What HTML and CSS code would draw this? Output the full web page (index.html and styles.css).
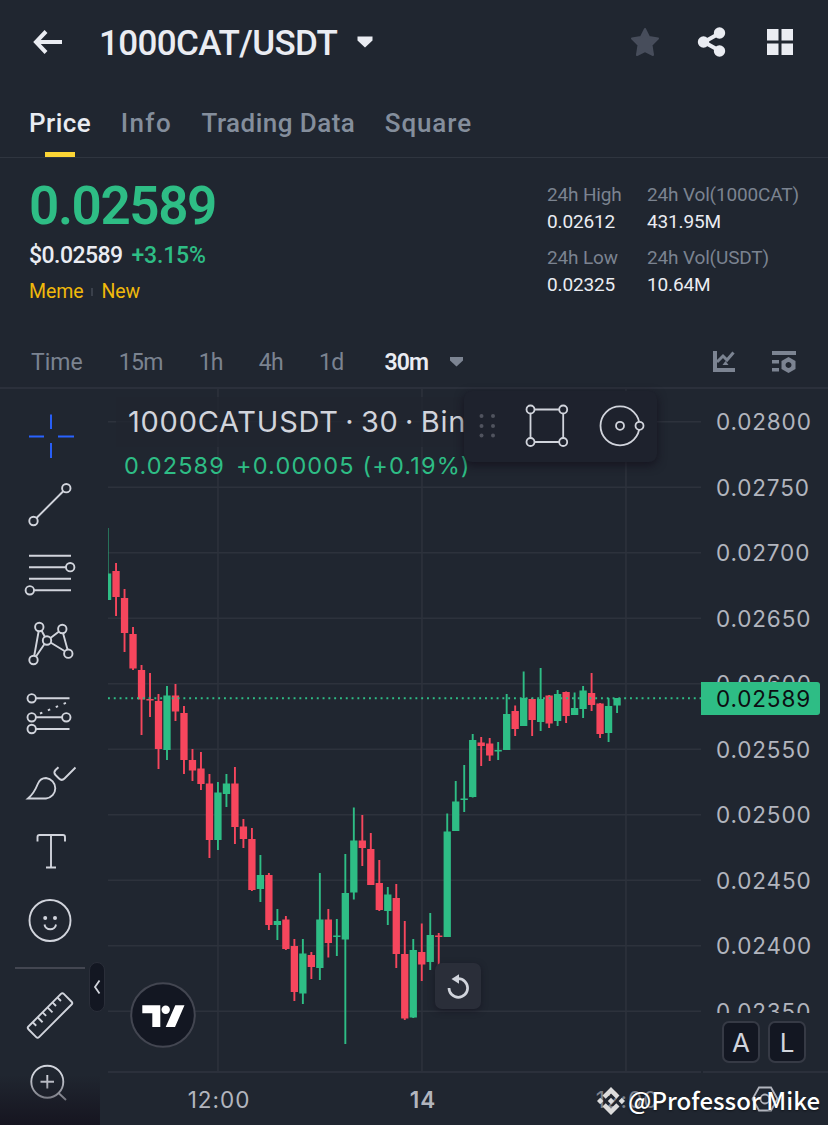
FILE: index.html
```html
<!DOCTYPE html>
<html lang="en">
<head>
    <meta charset="UTF-8">
    <meta name="viewport" content="width=device-width, initial-scale=1.0">
    <title>1000CAT/USDT</title>
    <link rel="stylesheet" href="styles.css">
</head>
<body>
    <header class="header">
        <svg class="back" width="30" height="24" viewBox="0 0 30 24"><path d="M13 1.5L3 12l10 10.500M3 12h26" fill="none" stroke="#eaecf2" stroke-width="4"/></svg>
        <h1 class="pair">1000CAT/USDT</h1>
        <svg class="caret" width="16" height="12" viewBox="0 0 16 12"><path d="M.5 .5h15v4L8 11.500.500 4.500z" fill="#eaecf2"/></svg>
        <div class="actions">
            <svg width="30" height="30" viewBox="0 0 30 30"><path d="M15 2l4 8 9 1.500-6.500 6.500 1.500 10-8-4-8 4 1.500-10L2 11.500 11 10z" fill="#474d5b" stroke="#474d5b" stroke-width="2" stroke-linejoin="round"/></svg>
            <svg width="30" height="30" viewBox="0 0 30 30" fill="#eaecf2"><path d="M23 6L7 15l16 9" fill="none" stroke="#eaecf2" stroke-width="4"/><circle cx="22.500" cy="6" r="5.700"/><circle cx="6.500" cy="15" r="5.700"/><circle cx="22.500" cy="24" r="5.700"/></svg>
            <svg class="apps" width="26" height="26" viewBox="0 0 26 26" fill="#eaecf2"><path d="M0 0h11.500v11.500H0zM14.500 0H26v11.500H14.500zM0 14.500h11.500V26H0zM14.500 14.500H26V26H14.500z"/></svg>
        </div>
    </header>

    <nav class="tabs">
        <a class="tab active">Price</a>
        <a class="tab info">Info</a>
        <a class="tab">Trading Data</a>
        <a class="tab square">Square</a>
    </nav>

    <section class="summary">
        <div class="quote">
            <div class="last">0.02589</div>
            <div class="fiat"><span>$0.02589</span><span class="up">+3.15%</span></div>
            <div class="tags"><span>Meme</span><i></i><span>New</span></div>
        </div>
        <dl class="stats">
            <div><dt>24h High</dt><dd>0.02612</dd></div>
            <div><dt>24h Vol(1000CAT)</dt><dd>431.95M</dd></div>
            <div><dt>24h Low</dt><dd>0.02325</dd></div>
            <div><dt>24h Vol(USDT)</dt><dd>10.64M</dd></div>
        </dl>
    </section>

    <div class="intervals">
        <span class="line-mode">Time</span>
        <span>15m</span>
        <span>1h</span>
        <span>4h</span>
        <span>1d</span>
        <span class="selected">30m</span>
        <svg class="more" width="13" height="10" viewBox="0 0 13 10"><path d="M0 0h13v3.500L6.500 9.500 0 3.500z" fill="#7c8492"/></svg>
        <div class="chart-actions">
            <svg width="22" height="22" viewBox="0 0 22 22"><path d="M2 0v19h20" fill="none" stroke="#7c8492" stroke-width="4"/><path d="M4 11l6-6 4 4 6.500-7.500" fill="none" stroke="#7c8492" stroke-width="3"/><path d="M12.500 10l3 4h-6z" fill="#7c8492"/></svg>
            <svg width="24" height="24" viewBox="0 0 24 24" fill="#7c8492"><path d="M0 1h24v4H0zM0 10h7v3.500H0zM0 18h7v3.500H0z"/><path fill-rule="evenodd" d="M16.500 7l7 4v8l-7 4-7-4v-8zM16.500 12a3 3 0 1 0 .01 0z"/></svg>
        </div>
    </div>

    <main class="chart">
        <aside class="tools">
            <svg class="tool" viewBox="0 0 100 69"><path d="M51 12.500V27M51 41v15M29 34.500h15M58 34.500h16" stroke="#2962ff"/></svg>
            <svg class="tool" viewBox="0 0 100 69"><path d="M36.500 47l27-27"/><circle cx="66.300" cy="17.200" r="4.200"/><circle cx="33.500" cy="50" r="4.200"/></svg>
            <svg class="tool" viewBox="0 0 100 69"><path d="M29 15.800h42M29 27.200h37M29 38.800h42M34 50.300h37"/><circle cx="70.200" cy="27.200" r="4.200"/><circle cx="29.800" cy="50.300" r="4.200"/></svg>
            <svg class="tool" viewBox="0 0 100 69"><path d="M38.700 22l-4.500 25M41.500 21.500l3.500 6.500M44.500 35l-8.500 12.500M50.500 29l8.500-6.500M63 24l4.500 16.500M50.500 33.500l14 8.500"/><circle cx="39.300" cy="18" r="4.200"/><circle cx="62.300" cy="20" r="4.200"/><circle cx="47" cy="31.500" r="4.200"/><circle cx="33.500" cy="51" r="4.200"/><circle cx="68.300" cy="44.700" r="4.200"/></svg>
            <svg class="tool" viewBox="0 0 100 69"><path d="M36 20.300h33.500M36 39.300h26M36 51h33.500"/><path d="M40 35.500l27-11" stroke-dasharray="2.500 6"/><circle cx="31.700" cy="20.300" r="4.200"/><circle cx="31.700" cy="39.300" r="4.200"/><circle cx="66.300" cy="39.300" r="4.200"/><circle cx="31.700" cy="51" r="4.200"/></svg>
            <svg class="tool" viewBox="0 0 100 69"><path d="M28 51.500c6-5 8-10 10-15 1.500-3.500 5-5.500 8-5.500a10.300 10.300 0 0 1 0 20.500zM75.500 20.500L64.500 31.500c-2 2-4 1.500-5.500 0l-3.500-3.500c-1.500-1.500-1.500-3.500 0-5l3-2.800"/></svg>
            <svg class="tool" viewBox="0 0 100 69"><path d="M37.500 25.500V21q0-2 2-2h23.500q2 0 2 2v4.500M51 19v32.500M46 51.500h10"/></svg>
            <svg class="tool" viewBox="0 0 100 69"><circle cx="50" cy="35.500" r="20.500"/><path d="M44.500 39.500a5.800 5.500 0 0 0 11.500 0"/><g fill="#d1d4dc" stroke="none"><circle cx="45.200" cy="33" r="2"/><circle cx="55" cy="33" r="2"/></g></svg>
            <hr class="divider">
            <svg class="tool" viewBox="0 0 100 69"><g transform="rotate(-45 50 34.500)"><rect x="25" y="27" width="50" height="15" rx="2"/><path d="M33 27v5M40 27v7M47 27v5M54 27v7M61 27v5M68 27v5"/></g></svg>
            <svg class="tool" viewBox="0 0 100 69"><circle cx="47.300" cy="31.700" r="16"/><path d="M40.500 31.700h13.500M47.300 25v13.500M58.500 43l7.500 7"/></svg>
        </aside>
        <button class="collapse"><svg width="8" height="16" viewBox="0 0 8 16"><path d="M6.500 1.500L2 8l4.500 6.500" fill="none" stroke="#d1d4dc" stroke-width="1.800"/></svg></button>

        <div class="pane">
            <svg id="plot" class="plot" viewBox="108 389 593 682"></svg>
            <div class="time-axis">
                <span>12:00</span>
                <span class="day">14</span>
                <span class="dim">12:00</span>
            </div>
            <div class="legend">
                <div class="symbol">1000CATUSDT · 30 · Bin</div>
                <div class="change"><span>0.02589</span><span>+0.00005 (+0.19%)</span></div>
            </div>
            <svg class="tv-logo" viewBox="0 0 66 66"><circle cx="33" cy="33" r="31.800" fill="#131722" stroke="#434651" stroke-width="2"/><g fill="#fff"><path d="M12.300 23.300h18V45h-8V31.300h-10zM45.300 23.300H54.500L45 45h-9.300z"/><circle cx="35.700" cy="27.700" r="4.200"/></g></svg>
            <button class="reset"><svg width="24" height="26" viewBox="0 0 24 26"><path d="M3 15a9.300 9.300 0 1 0 9.300-9.300" fill="none" stroke="#d1d4dc" stroke-width="2.700"/><path d="M5.500 6L13 1.300v9.400z" fill="#d1d4dc"/></svg></button>
            <div class="shapes">
                <svg width="193" height="71" viewBox="464 391 193 71" fill="none" stroke="#d1d4dc" stroke-width="1.800">
                    <g fill="#50535e" stroke="none"><circle cx="481.500" cy="416" r="2"/><circle cx="493" cy="416" r="2"/><circle cx="481.500" cy="426" r="2"/><circle cx="493" cy="426" r="2"/><circle cx="481.500" cy="435.500" r="2"/><circle cx="493" cy="435.500" r="2"/></g>
                    <path d="M534.500 409.500H559M534.500 442H559M530.500 413.500V438M563.200 413.500V438"/>
                    <circle cx="530.500" cy="409.500" r="4"/><circle cx="563.200" cy="409.500" r="4"/><circle cx="530.500" cy="442" r="4"/><circle cx="563.200" cy="442" r="4"/>
                    <circle cx="620" cy="425.800" r="19.500"/><circle cx="620" cy="425.800" r="4"/><circle cx="639.500" cy="425.800" r="4" fill="#1e222d"/>
                </svg>
            </div>
        </div>

        <div class="price-axis">
            <div class="prices">
                <span>0.02800</span>
                <span>0.02750</span>
                <span>0.02700</span>
                <span>0.02650</span>
                <span>0.02600</span>
                <span>0.02550</span>
                <span>0.02500</span>
                <span>0.02450</span>
                <span>0.02400</span>
                <span>0.02350</span>
            </div>
            <div class="current">0.02589</div>
            <div class="scale">
                <button>A</button>
                <button>L</button>
            </div>
            <div class="settings">
                <svg width="28" height="28" viewBox="0 0 28 28" fill="none" stroke="#b2b5be" stroke-width="1.800"><path d="M8 2.500h12L26.500 14 20 25.500H8L1.500 14z"/><circle cx="14" cy="14" r="4.500"/></svg>
            </div>
        </div>
    </main>

    <div class="watermark">
        <svg width="28" height="28" viewBox="0 0 28 28" fill="#dcdcdc"><path d="M14 0l8.500 8.500-3.200 3.200L14 6.400l-5.300 5.300-3.200-3.200zM3.200 10.800L6.400 14l-3.200 3.200L0 14zM14 10.800l3.200 3.200-3.200 3.200-3.200-3.200zM24.800 10.800L28 14l-3.200 3.200-3.200-3.200zM8.700 16.300l5.300 5.300 5.300-5.300 3.200 3.200L14 28l-8.500-8.500z"/></svg>
        <span>@Professor Mike</span>
    </div>

    <script>
        const UP = '#2ebd85';
        const DOWN = '#f6465d';

        // direction, wick top, wick bottom, body top, body bottom
        const candles = [
            ['u', 528, 600, 573.5, 600], ['d', 563, 616, 571, 597], ['d', 589, 652, 598, 633],
            ['d', 627, 670, 634, 668.5], ['d', 665, 735, 670, 699.5], ['d', 673, 717, 699, 700.5],
            ['d', 694, 769, 701, 749], ['u', 686, 760, 695.5, 750], ['d', 684, 721, 695.5, 711.5],
            ['d', 706, 774, 713, 760], ['d', 749, 781, 760, 770.5], ['d', 752, 790, 768.5, 784],
            ['d', 774, 858, 783.5, 840], ['u', 782, 850, 792.5, 840], ['u', 774, 807, 783.5, 794],
            ['d', 767, 844, 783.5, 827], ['d', 819, 848, 826.5, 839], ['d', 828, 891, 839, 890],
            ['u', 855, 902, 875, 889], ['d', 873, 930, 875, 925], ['u', 909, 940, 921, 925],
            ['d', 916, 950, 919.5, 949], ['d', 939, 1001, 946, 992], ['u', 939, 1004, 953.5, 993.5],
            ['d', 952, 979, 955, 967], ['u', 873, 980, 919.5, 968], ['d', 909, 957.5, 919.5, 943],
            ['u', 919, 956, 935.5, 937], ['u', 854, 1044, 893, 939.5], ['u', 807.5, 899.5, 840.5, 892.5],
            ['d', 815, 866, 840.5, 848], ['d', 833, 885, 849, 885], ['d', 860, 911, 883, 910],
            ['u', 887, 925, 894.5, 911], ['d', 884, 968, 898, 954], ['d', 921, 1020, 954, 1018.5],
            ['u', 939, 1018, 950, 1017.5], ['d', 923.5, 981, 952, 964.5], ['u', 913, 970, 935, 962],
            ['d', 933, 970, 935.5, 937], ['u', 813.5, 937, 831.5, 937], ['u', 781, 831, 801.5, 831],
            ['u', 765, 812, 798.5, 800], ['u', 734, 797.5, 740, 797], ['d', 737, 766, 742.5, 746],
            ['d', 738, 761, 743.5, 755.5], ['u', 742, 760, 750, 751.5], ['u', 694, 750, 714, 750],
            ['d', 705.5, 736, 711, 729], ['u', 671.5, 726, 698, 726], ['d', 698, 736, 699, 720],
            ['u', 668, 731, 699, 722], ['d', 695, 728, 695.5, 723.5], ['u', 690, 726, 694, 721],
            ['d', 691.5, 723, 692, 716], ['u', 692.5, 715, 708, 715], ['u', 686, 718, 690.5, 709],
            ['d', 673, 711, 693, 705], ['d', 703, 738, 703.5, 734], ['u', 698, 742, 706, 733],
            ['u', 698, 713, 698, 705.5]
        ];

        let out = '<g stroke="#2d323c" stroke-width="1.6">';
        for (let i = 0; i < 10; i++) {
            const y = 421.8 + i * 65.5;
            out += `<line x1="108" x2="701" y1="${y}" y2="${y}"/>`;
        }
        [218, 422, 626].forEach(x => {
            out += `<line x1="${x}" x2="${x}" y1="389" y2="1072"/>`;
        });
        out += '</g>';

        candles.forEach((c, i) => {
            const color = c[0] === 'u' ? UP : DOWN;
            const x = 107.5 + i * 8.492;
            out += `<rect x="${x - 0.9}" y="${c[1]}" width="1.9" height="${c[2] - c[1]}" fill="${color}"/>`;
            out += `<rect x="${x - 3.6}" y="${c[3]}" width="7.3" height="${c[4] - c[3]}" fill="${color}"/>`;
        });

        out += `<line x1="108" x2="701" y1="698.3" y2="698.3" stroke="${UP}" stroke-width="1.9" stroke-dasharray="1.9 3.9"/>`;
        document.getElementById('plot').innerHTML = out;
    </script>
</body>
</html>
```
FILE: styles.css
```css
* {
    box-sizing: border-box;
}
body {
    margin: 0;
    width: 828px;
    height: 1125px;
    overflow: hidden;
    position: relative;
    background-color: #202630;
    color: #eaecf2;
    font-family: Roboto, sans-serif;
}
button {
    padding: 0;
    font-family: inherit;
    display: flex;
    align-items: center;
    justify-content: center;
}
.header {
    display: flex;
    align-items: center;
    height: 85px;
    padding: 0 35px 0 33px;
}
.back {
    margin-top: -2px;
}
.pair {
    margin: 2px 0 0 36px;
    font-size: 35px;
    font-weight: 500;
    letter-spacing: -0.65px;
}
.caret {
    margin: -2px 0 0 20px;
}
.actions {
    display: flex;
    align-items: center;
    gap: 37px;
    margin-left: auto;
    margin-top: -1px;
}
.apps {
    margin-left: 3px;
}
.tabs {
    display: flex;
    gap: 29.5px;
    height: 73px;
    padding: 20px 29px 0;
    border-bottom: 1px solid #2f353f;
}
.tab {
    position: relative;
    font-size: 26px;
    line-height: 36px;
    font-weight: 500;
    letter-spacing: 0.45px;
    color: #848e9c;
}
.tab.info {
    letter-spacing: 1.4px;
}
.tab.square {
    letter-spacing: 0.9px;
}
.tab.active {
    color: #eaecf2;
}
.tab.active::after {
    content: "";
    position: absolute;
    left: 16px;
    bottom: 0;
    width: 30px;
    height: 5px;
    background-color: #fcd535;
}
.summary {
    display: flex;
    justify-content: space-between;
    height: 177px;
    padding: 19px 29px 0;
}
.last {
    font-size: 53px;
    line-height: 58px;
    font-weight: 600;
    letter-spacing: -1.4px;
    color: #2ebd85;
}
.fiat {
    display: flex;
    gap: 9px;
    margin-top: 6px;
    font-size: 23px;
    line-height: 30px;
    font-weight: 500;
    letter-spacing: -0.55px;
}
.up {
    letter-spacing: -0.2px;
    color: #2ebd85;
}
.tags {
    display: flex;
    align-items: center;
    gap: 8px;
    margin-top: 8px;
    font-size: 19.5px;
    line-height: 26px;
    letter-spacing: -0.1px;
    color: #f0b90b;
}
.tags i {
    width: 2px;
    height: 8px;
    background-color: #3a404b;
}
.stats {
    display: grid;
    grid-template-columns: 100px 152px;
    align-content: start;
    row-gap: 10px;
    margin: 5px 0 0;
    font-size: 19px;
    line-height: 26.7px;
    letter-spacing: -0.15px;
}
.stats dt {
    color: #7b8390;
    white-space: nowrap;
}
.stats dd {
    margin: 0;
}
.intervals {
    display: flex;
    align-items: center;
    gap: 36px;
    height: 54px;
    padding: 2px 31px 0;
    border-bottom: 2px solid #2b303b;
    font-size: 23px;
    letter-spacing: -0.7px;
    color: #7b8390;
}
.line-mode {
    letter-spacing: 0;
}
.selected {
    margin-left: 5px;
    font-weight: 600;
    letter-spacing: -0.9px;
    color: #eaecf2;
}
.more {
    margin-left: -14px;
}
.chart-actions {
    display: flex;
    align-items: center;
    gap: 37px;
    margin-left: auto;
    margin-right: 1px;
}
.chart {
    display: flex;
    position: relative;
    height: 736px;
    font-family: Inter, sans-serif;
}
.tools {
    display: flex;
    flex-direction: column;
    width: 100px;
    height: 736px;
    padding-top: 13px;
    margin-right: 8px;
    position: relative;
}
.tools::after {
    content: "";
    position: absolute;
    left: 0;
    right: 0;
    bottom: 0;
    height: 50px;
    background: linear-gradient(rgba(22, 21, 32, 0), #161520);
}
.tool {
    width: 100px;
    height: 69px;
    flex: none;
    fill: none;
    stroke: #d1d4dc;
    stroke-width: 1.9;
}
.divider {
    flex: none;
    width: 70px;
    height: 2px;
    margin: 13px 0 12px 15px;
    border: 0;
    background-color: #434651;
}
.collapse {
    position: absolute;
    left: 89px;
    top: 573px;
    width: 16px;
    height: 50px;
    border: 1px solid #2a2e39;
    border-radius: 8px;
    background-color: #131722;
}
.pane {
    position: relative;
    width: 593px;
}
.plot {
    display: block;
    width: 593px;
    height: 682px;
}
.time-axis {
    display: grid;
    grid-template-columns: 204px 204px 204px;
    width: 593px;
    height: 54px;
    padding: 0 0 0 9px;
    border-top: 2px solid #2b303b;
    line-height: 53px;
    font-size: 22.5px;
    letter-spacing: 1px;
    text-align: center;
    color: #b2b5be;
}
.day {
    font-weight: 600;
}
.dim {
    color: #7d828d;
}
.legend {
    position: absolute;
    left: 8px;
    top: 8px;
}
.symbol {
    padding-left: 12px;
    font-size: 29px;
    line-height: 50px;
    letter-spacing: 0.75px;
    word-spacing: -2.4px;
    white-space: nowrap;
    color: #d1d4dc;
    background-color: rgba(32, 38, 48, 0.8);
}
.change {
    display: flex;
    gap: 11px;
    padding-left: 8px;
    margin-top: 4px;
    font-size: 23.5px;
    line-height: 30px;
    letter-spacing: 1.15px;
    white-space: nowrap;
    color: #2ebd85;
}
.tv-logo {
    position: absolute;
    left: 22px;
    top: 593px;
    width: 66px;
    height: 66px;
}
.reset {
    position: absolute;
    left: 327px;
    top: 574px;
    width: 46px;
    height: 46px;
    border: 0;
    border-radius: 7px;
    background-color: #2a2e39;
    box-shadow: 0 2px 6px rgba(19, 17, 30, 0.6);
}
.shapes {
    position: absolute;
    left: 356px;
    top: 2px;
    width: 193px;
    height: 71px;
    border-radius: 8px;
    background-color: #1e222d;
    box-shadow: 0 3px 10px rgba(18, 14, 26, 0.75);
}
.price-axis {
    position: relative;
    width: 127px;
}
.prices {
    display: flex;
    flex-direction: column;
    height: 624px;
    overflow: hidden;
    padding-left: 15px;
    font-size: 22.5px;
    line-height: 65px;
    letter-spacing: 0.85px;
    color: #b2b5be;
}
.prices span {
    flex: none;
    height: 65.5px;
}
.current {
    position: absolute;
    left: 0;
    top: 293px;
    width: 119px;
    height: 33px;
    padding-left: 15px;
    border-radius: 0 3px 3px 0;
    background-color: #2ebd85;
    color: #0c0e12;
    font-size: 22.5px;
    line-height: 33px;
    letter-spacing: 0.85px;
}
.scale {
    display: flex;
    gap: 8px;
    padding: 8px 0 0 21px;
    height: 58px;
}
.scale button {
    width: 38px;
    height: 42px;
    border: 2px solid #363a45;
    border-radius: 7px;
    background-color: #131722;
    color: #d1d4dc;
    font-size: 26px;
}
.settings {
    height: 54px;
    margin-left: 2px;
    padding: 12px 0 0 48px;
    border-top: 2px solid #2b303b;
}
.watermark {
    position: absolute;
    left: 597px;
    top: 1083px;
    display: flex;
    align-items: center;
    gap: 3px;
    height: 36px;
    font-family: "Noto Sans CJK SC", sans-serif;
    font-size: 24px;
    line-height: 32px;
    font-weight: 500;
    white-space: nowrap;
    color: #fff;
    text-shadow: 0 1px 2px rgba(0, 0, 0, 0.5);
}
.watermark span {
    margin-top: -2px;
    letter-spacing: 0.05px;
}
```
